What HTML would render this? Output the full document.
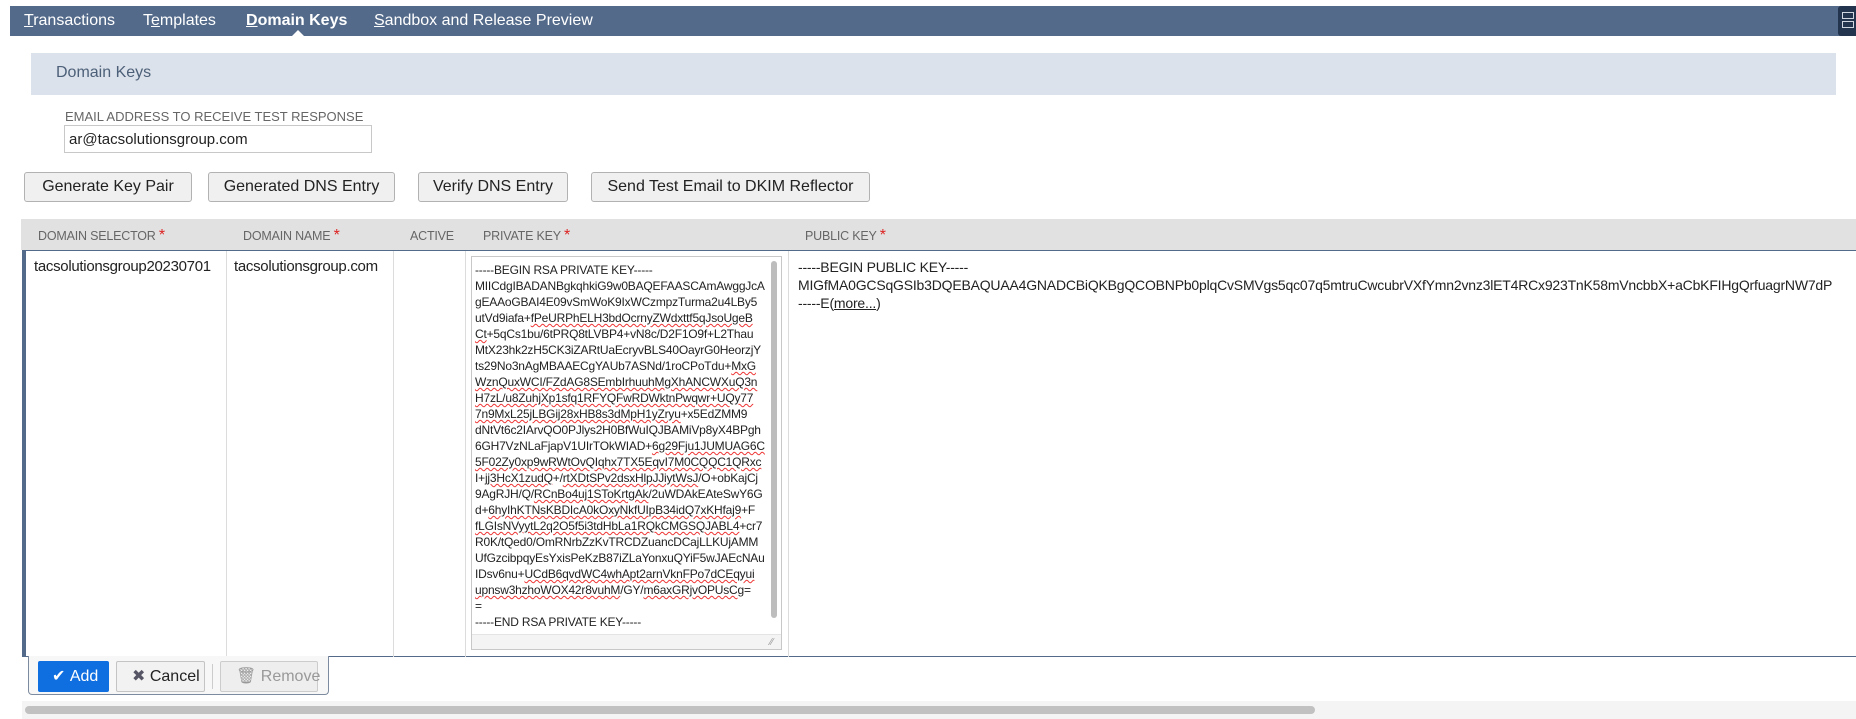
<!DOCTYPE html>
<html><head><meta charset="utf-8"><style>
*{box-sizing:border-box;margin:0;padding:0}
body{width:1856px;height:719px;overflow:hidden;background:#fff;font-family:"Liberation Sans",sans-serif;position:relative;color:#222}
.a{position:absolute;white-space:nowrap}
.nav{left:10px;top:6px;width:1846px;height:30px;background:#536a8a}
.tab{top:12px;font-size:16px;color:#fff}
.band{left:31px;top:53px;width:1805px;height:42px;background:#dce2eb}
.btn{top:172px;height:30px;background:#f0f0f0;border:1px solid #b2b2b2;border-radius:3px;font-size:16px;line-height:28px;text-align:center;color:#222}
.hd{top:219px;left:21px;width:1835px;height:31px;background:#e1e1e1}
.ht{top:228px;font-size:12.5px;line-height:16px;color:#666;letter-spacing:-0.2px}
.ht b{color:#d22;font-weight:normal;font-size:16px;line-height:10px}
.sep{top:251px;height:406px;width:1px;background:#dcdcdc}
.pk{font-size:12px;line-height:16px;color:#222;letter-spacing:-0.2px}
.w{text-decoration:underline wavy #e33;text-decoration-thickness:1px}
</style></head><body>
<div class="a nav"></div>
<div class="a" style="left:1838px;top:6px;width:18px;height:30px;background:#23344f;border-radius:3px 0 0 3px"></div>
<div class="a" style="left:1842px;top:12px;width:12px;height:7px;border:1.5px solid #cfd6e0"></div>
<div class="a" style="left:1842px;top:21px;width:12px;height:7px;border:1.5px solid #cfd6e0"></div>
<div class="a tab" style="left:24px"><u>T</u>ransactions</div>
<div class="a tab" style="left:143px">T<u>e</u>mplates</div>
<div class="a tab" style="left:246px;font-weight:bold"><u>D</u>omain Keys</div>
<div class="a tab" style="left:374px"><u>S</u>andbox and Release Preview</div>
<div class="a" style="left:292px;top:30px;width:0;height:0;border-left:6px solid transparent;border-right:6px solid transparent;border-bottom:6px solid #fff"></div>
<div class="a band"></div>
<div class="a" style="left:56px;top:64px;font-size:16px;color:#4d6079">Domain Keys</div>
<div class="a" style="left:65px;top:109px;font-size:13px;color:#666">EMAIL ADDRESS TO RECEIVE TEST RESPONSE</div>
<div class="a" style="left:64px;top:125px;width:308px;height:28px;border:1px solid #c8c8c8;font-size:15px;padding:5px 0 0 4px">ar@tacsolutionsgroup.com</div>
<div class="a btn" style="left:24px;width:168px">Generate Key Pair</div>
<div class="a btn" style="left:208px;width:187px">Generated DNS Entry</div>
<div class="a btn" style="left:418px;width:150px">Verify DNS Entry</div>
<div class="a btn" style="left:591px;width:279px">Send Test Email to DKIM Reflector</div>
<div class="a hd"></div>
<div class="a ht" style="left:38px">DOMAIN SELECTOR <b>*</b></div>
<div class="a ht" style="left:243px">DOMAIN NAME <b>*</b></div>
<div class="a ht" style="left:410px">ACTIVE</div>
<div class="a ht" style="left:483px">PRIVATE KEY <b>*</b></div>
<div class="a ht" style="left:805px">PUBLIC KEY <b>*</b></div>
<div class="a" style="left:22px;top:250px;width:1834px;height:1px;background:#536a8a"></div>
<div class="a" style="left:22px;top:656px;width:1834px;height:1px;background:#536a8a"></div>
<div class="a" style="left:22px;top:250px;width:4px;height:407px;background:#536a8a"></div>
<div class="a sep" style="left:226px"></div>
<div class="a sep" style="left:393px"></div>
<div class="a sep" style="left:465px"></div>
<div class="a sep" style="left:788px"></div>
<div class="a" style="left:34px;top:258px;font-size:15px;letter-spacing:-0.3px">tacsolutionsgroup20230701</div>
<div class="a" style="left:234px;top:258px;font-size:15px;letter-spacing:-0.3px">tacsolutionsgroup.com</div>
<div class="a" style="left:471px;top:256px;width:311px;height:394px;border:1px solid #c8c8c8;background:#fff"></div>
<div class="a" style="left:472px;top:634px;width:309px;height:15px;background:#f4f4f4;border-top:1px solid #e4e4e4"></div>
<div class="a" style="left:771px;top:261px;width:6px;height:357px;background:#bdbdbd;border-radius:3px"></div>
<div class="a" style="left:770px;top:637px;color:#999;font-size:10px">&#8725;&#8725;</div>
<div class="a pk" style="left:475px;top:262px">-----BEGIN RSA PRIVATE KEY-----<br>MIICdgIBADANBgkqhkiG9w0BAQEFAASCAmAwggJcA<br>gEAAoGBAI4E09vSmWoK9IxWCzmpzTurma2u4LBy5<br>utVd9iafa+<span class="w">fPeURPhELH3bdOcrnyZWdxttf5qJsoUgeB</span><br><span class="w">Ct</span>+5qCs1bu/6tPRQ8tLVBP4+vN8c/D2F1O9f+L2Thau<br>MtX23hk2zH5CK3iZARtUaEcryvBLS40OayrG0HeorzjY<br>ts29No3nAgMBAAECgYAUb7ASNd/1roCPoTdu+<span class="w">MxG</span><br><span class="w">WznQuxWCI/FZdAG8SEmbIrhuuhMgXhANCWXuQ3n</span><br><span class="w">H7zL/u8ZuhjXp1sfq1RFYQFwRDWktnPwqwr+UQy77</span><br><span class="w">7n9MxL25jLBGij28xHB8s3dMpH1yZryu</span>+x5EdZMM9<br>dNtVt6c2IArvQO0PJlys2H0BfWuIQJBAMiVp8yX4BPgh<br>6GH7VzNLaFjapV1UIrTOkWIAD+<span class="w">6g29Fju1JUMUAG6C</span><br><span class="w">5F02Zy0xp9wRWtOvQIqhx7TX5EqvI7M0CQQC1QRxc</span><br>I+<span class="w">jj3HcX1zudQ</span>+/<span class="w">rtXDtSPv2dsxHlpJJiytWsJ</span>/O+obKajCj<br>9AgRJH/Q/<span class="w">RCnBo4uj1SToKrtgAk</span>/2uWDAkEAteSwY6G<br>d+<span class="w">6hyIhKTNsKBDIcA0kOxyNkfUIpB34idQ7xKHfaj9</span>+F<br><span class="w">fLGIsNVyytL2q2O5f5i3tdHbLa1RQkCMGSQJABL4</span>+cr7<br>R0K/tQed0/OmRNrbZzKvTRCDZuancDCajLLKUjAMM<br>UfGzcibpqyEsYxisPeKzB87iZLaYonxuQYiF5wJAEcNAu<br>IDsv6nu+<span class="w">UCdB6qvdWC4whApt2arnVknFPo7dCEqyui</span><br><span class="w">upnsw3hzhoWOX42r8vuhM</span>/GY/<span class="w">m6axGRjvOPUsCg</span>=<br>=<br>-----END RSA PRIVATE KEY-----</div>
<div class="a" style="left:798px;top:258px;font-size:14px;line-height:18px;letter-spacing:-0.2px">-----BEGIN PUBLIC KEY-----<br>MIGfMA0GCSqGSIb3DQEBAQUAA4GNADCBiQKBgQCOBNPb0plqCvSMVgs5qc07q5mtruCwcubrVXfYmn2vnz3lET4RCx923TnK58mVncbbX+aCbKFIHgQrfuagrNW7dP<br>-----E(<span style="text-decoration:underline">more...</span>)</div>
<div class="a" style="left:28px;top:656px;width:301px;height:39px;border:1px solid #7d8ba0;border-top:none;border-radius:0 0 4px 4px;background:#f7f7f7"></div>
<div class="a" style="left:38px;top:661px;width:71px;height:31px;background:#0f6ee0;border-radius:2px;color:#fff;font-size:16px;line-height:31px;padding-left:14px">&#10004;&nbsp;Add</div>
<div class="a" style="left:116px;top:661px;width:89px;height:31px;background:#f2f2f2;border:1px solid #c4c4c4;border-radius:2px;font-size:16px;line-height:29px;padding-left:15px"><span style="color:#556">&#10006;</span> Cancel</div>
<div class="a" style="left:212px;top:664px;width:1px;height:25px;background:#ccc"></div>
<div class="a" style="left:220px;top:661px;width:98px;height:31px;background:#eee;border:1px solid #ccc;border-radius:2px;font-size:16px;line-height:29px;padding-left:15px;color:#999">&#128465;&#xFE0E; Remove</div>
<div class="a" style="left:22px;top:701px;width:1834px;height:18px;background:#f4f4f4"></div>
<div class="a" style="left:25px;top:706px;width:1290px;height:8px;background:#c1c1c1;border-radius:4px"></div>
</body></html>
